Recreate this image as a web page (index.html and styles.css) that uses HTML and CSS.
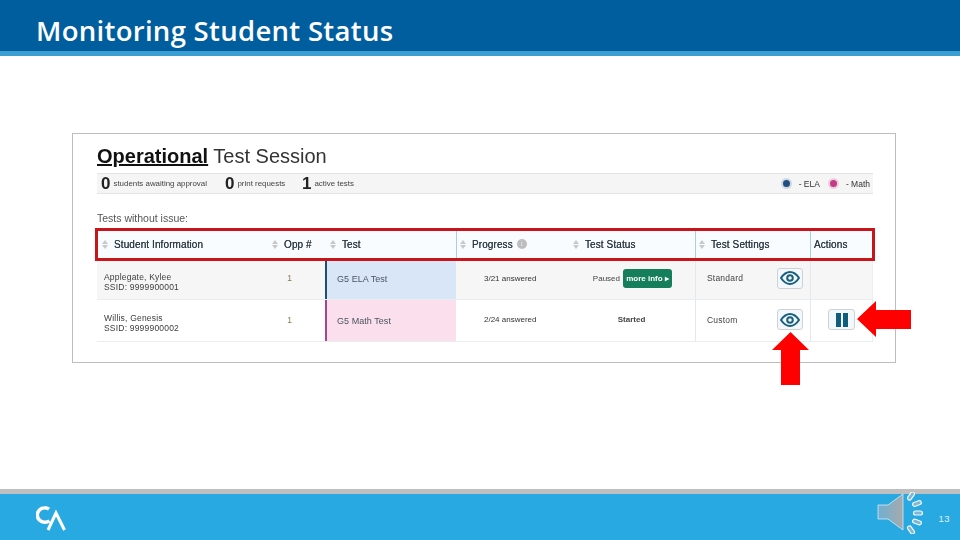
FILE: index.html
```html
<!DOCTYPE html>
<html lang="en">
<head>
<meta charset="utf-8">
<title>Monitoring Student Status</title>
<link rel="stylesheet" href="styles.css">
</head>
<body>
<div class="slide">
  <header class="top"><h1>Monitoring Student Status</h1></header>
  <main class="main">
    <section class="card">
      <h2 class="title"><strong>Operational</strong> Test Session</h2>
      <div class="bar">
        <div class="stat wide"><b>0</b><span>students awaiting approval</span></div>
        <div class="stat mid"><b>0</b><span>print requests</span></div>
        <div class="stat"><b>1</b><span>active tests</span></div>
        <div class="legend">
          <i class="dot ela"></i><span>- ELA</span>
          <i class="dot math"></i><span>- Math</span>
        </div>
      </div>
      <p class="issue">Tests without issue:</p>
      <div class="thead">
        <div class="th first"><i class="sort"></i>Student Information</div>
        <div class="th"><i class="sort"></i>Opp #</div>
        <div class="th"><i class="sort"></i>Test</div>
        <div class="th sep tight"><i class="sort"></i>Progress<i class="info">i</i></div>
        <div class="th"><i class="sort"></i>Test Status</div>
        <div class="th sep tight"><i class="sort"></i>Test Settings</div>
        <div class="th sep act">Actions</div>
      </div>
      <div class="row one">
        <div class="td student">Applegate, Kylee<br>SSID: 9999900001</div>
        <div class="td opp">1</div>
        <div class="td test ela-test">G5 ELA Test</div>
        <div class="td prog">3/21 answered</div>
        <div class="td status">Paused<span class="more">more info ▸</span></div>
        <div class="td settings">Standard
          <span class="btn"><svg class="eye" viewBox="0 0 20 14"><path d="M1 7C4 2.500 7 1 10 1s6 1.500 9 6c-3 4.500-6 6-9 6s-6-1.500-9-6z"/><circle cx="10" cy="7" r="2.800"/></svg></span>
        </div>
        <div class="td actions"></div>
      </div>
      <div class="row two">
        <div class="td student">Willis, Genesis<br>SSID: 9999900002</div>
        <div class="td opp">1</div>
        <div class="td test math-test">G5 Math Test</div>
        <div class="td prog">2/24 answered</div>
        <div class="td status started">Started</div>
        <div class="td settings">Custom
          <span class="btn"><svg class="eye" viewBox="0 0 20 14"><path d="M1 7C4 2.500 7 1 10 1s6 1.500 9 6c-3 4.500-6 6-9 6s-6-1.500-9-6z"/><circle cx="10" cy="7" r="2.800"/></svg></span>
        </div>
        <div class="td actions"><span class="btn pause"><i></i><i></i></span></div>
      </div>
    </section>
  </main>
  <footer class="foot">
    <svg class="logo" viewBox="0 0 30 25">
      <path class="logo-c" d="M13 3.200A7.300 7.300 0 0 0 8.500 1.800A7.200 7.200 0 0 0 8.500 16.200A7.300 7.300 0 0 0 13.500 14.800"/>
      <path class="logo-a" d="M12 24 20 7l8.500 17"/>
    </svg>
    <svg class="speaker" viewBox="0 0 46 42">
      <defs><linearGradient id="spk" x1="0" x2="1" y1="0" y2="0"><stop offset="0" stop-color="#6fb0d2"/><stop offset="1" stop-color="#a6a9ab"/></linearGradient></defs>
      <path d="M1 13H11L26 2V38L11 27H1Z" fill="url(#spk)" stroke="#e8f4fa" stroke-width="0.700"/>
      <g fill="#7fb6d3" stroke="#f2f9fc" stroke-width="1.200">
        <rect x="29.500" y="2" width="9" height="4" rx="2" transform="rotate(-55 34 4)"/>
        <rect x="35.500" y="9.500" width="9" height="4" rx="2" transform="rotate(-20 40 11.500)"/>
        <rect x="36.500" y="19" width="9" height="4" rx="2"/>
        <rect x="35.500" y="28" width="9" height="4" rx="2" transform="rotate(20 40 30)"/>
        <rect x="29.500" y="36" width="9" height="4" rx="2" transform="rotate(55 34 38)"/>
      </g>
    </svg>
    <span class="page">13</span>
  </footer>
  <svg class="arrows" viewBox="0 0 960 540">
    <path d="M790.500 332 809 350H800V385H781V350H772Z"/>
    <path d="M857 319 876 301V310H911V329H876V337Z"/>
  </svg>
</div>
</body>
</html>
```

FILE: styles.css
```css
* { box-sizing: border-box; }
html, body { margin: 0; padding: 0; }
body { width: 960px; height: 540px; overflow: hidden; background: #fff; font-family: "Liberation Sans", Arial, sans-serif; }
.slide { position: relative; width: 960px; height: 540px; display: flex; flex-direction: column; }

.top { height: 56px; flex: none; background: #005e9e; border-bottom: 5px solid #3a9fd2; padding: 11px 0 0 36px; display: flex; align-items: center; }
.top h1 { margin: 0; color: #fff; font: 600 27.500px/1 "Open Sans", sans-serif; letter-spacing: 0.300px; }

.main { flex: 1; padding: 77px 64px 0 72px; }
.card { width: 824px; height: 230px; border: 1px solid #bdbdbd; padding: 12px 22px 0 24px; filter: blur(0.45px); }
.title { margin: 0; height: 24px; font: 400 20px/21px "Liberation Sans", sans-serif; color: #333; }
.title strong { color: #111; text-decoration: underline; }

.bar { margin-top: 3px; height: 21px; background: #f5f5f5; border: 1px solid #e4e4e4; border-width: 1px 0; padding: 0 3px 0 4px; display: flex; align-items: center; font-size: 7.900px; color: #444; }
.stat { display: flex; align-items: center; gap: 3px; }
.stat b { font-size: 17px; font-weight: 700; color: #222; }
.stat.wide { width: 124px; }
.stat.mid { width: 77px; }
.legend { margin-left: auto; display: flex; align-items: center; gap: 6px; font-size: 8.500px; color: #333; }
.dot { width: 11px; height: 11px; border-radius: 50%; border: 2px solid #cfd8e3; display: block; }
.dot.ela { background: #1f4e80; margin-right: 1px; }
.dot.math { background: #c23b83; border-color: #eccfe0; margin: 0 1px 0 2px; }

.issue { margin: 17px 0 3px; height: 14px; font-size: 10.500px; line-height: 14px; color: #555; }

.thead, .row { display: grid; }
.thead { grid-template-columns: 169px 58px 131px 112px 127px 115px 62px; margin: 0 -2px; height: 33px; border: 3px solid #c8151c; background: #f8fcfe; }
.th { display: flex; align-items: center; padding: 0 0 1px 5px; font-size: 10px; letter-spacing: 0.100px; color: #2f3c46; font-weight: 400; text-shadow: 0 0 0.600px #2f3c46; }
.th.first { padding-left: 4px; }
.th.tight { padding-left: 3px; }
.th.sep { border-left: 1px solid #a9cfe2; }
.th.act { padding-left: 3px; }
.sort { position: relative; display: block; width: 7px; height: 9px; margin-right: 5px; flex: none; }
.sort::before, .sort::after { content: ""; position: absolute; left: 0; border: 3.500px solid transparent; }
.sort::before { top: -3px; border-bottom: 4px solid #c5c9cc; }
.sort::after { bottom: -3px; border-top: 4px solid #c5c9cc; }
.info { width: 10px; height: 10px; border-radius: 50%; background: #bdbdbd; color: #fff; font: 700 8px/10px "Liberation Serif", serif; text-align: center; margin-left: 4px; }

.row { grid-template-columns: 170px 58px 131px 112px 127px 115px 63px; font-size: 8.500px; color: #444; border-bottom: 1px solid #e8edf0; }
.row.one { height: 39px; background: #f6f6f7; }
.row.two { height: 42px; background: #fff; }
.row.one .td { padding-bottom: 4px; }
.row.two .td { padding-bottom: 2px; }
.td { display: flex; align-items: center; }
.row .student { display: block; padding: 11px 0 0 7px; line-height: 10px; letter-spacing: 0.200px; font-size: 8.500px; color: #3d3d3d; }
.row.two .student { padding-top: 13px; }
.opp { justify-content: flex-end; padding-right: 33px; color: #8d7a55; }
.test { border-left: 2px solid; padding-left: 10px; font-size: 9px; letter-spacing: 0.050px; color: #4a5560; }
.row.one .test { padding-bottom: 2px; }
.row.two .test { padding-bottom: 0; }
.ela-test { background: #d8e6f8; border-color: #1f4e73; }
.math-test { background: #fbdfec; border-color: #a3478d; }
.prog { padding-left: 28px; font-size: 8px; color: #333; }
.status { justify-content: flex-end; padding-right: 23px; gap: 3px; font-size: 8px; color: #444; }
.status.started { justify-content: center; padding-right: 0; font-weight: 700; color: #444; }
.more { background: #157f5b; color: #fff; font-size: 8px; font-weight: 700; width: 49px; height: 19px; border-radius: 3px; display: flex; align-items: center; justify-content: center; }
.settings { border-left: 1px solid #e4e9ec; padding: 0 7px 0 11px; justify-content: space-between; font-size: 8.500px; letter-spacing: 0.200px; color: #444; }
.actions { border-left: 1px solid #e4e9ec; border-right: 1px solid #eceff1; justify-content: center; }
.btn { width: 26px; height: 21px; border: 1.500px solid #cfd2d4; border-radius: 3px; background: #f2f8fb; display: flex; align-items: center; justify-content: center; }
.eye { width: 20px; height: 14px; fill: none; stroke: #19607f; stroke-width: 2; }
.pause { gap: 2px; width: 27px; }
.pause i { width: 5px; height: 14px; background: #0f5c7f; display: block; }

.foot { flex: none; height: 51px; background: #29a9e1; border-top: 5px solid #bfbfbf; display: flex; align-items: flex-start; padding: 0 37px 0 36px; position: relative; }
.logo { width: 30px; height: 25px; margin-top: 12px; fill: none; stroke: #fff; }
.logo-c { stroke-width: 3.500; }
.logo-a { stroke-width: 3; }
.speaker { width: 46px; height: 42px; margin: -2px 0 0 auto; }
.page { position: absolute; right: 10px; top: 19px; font-size: 9.500px; line-height: 11px; letter-spacing: 0.500px; color: #dff2fb; }

.arrows { position: absolute; inset: 0; width: 960px; height: 540px; fill: #fe0000; pointer-events: none; }
```
